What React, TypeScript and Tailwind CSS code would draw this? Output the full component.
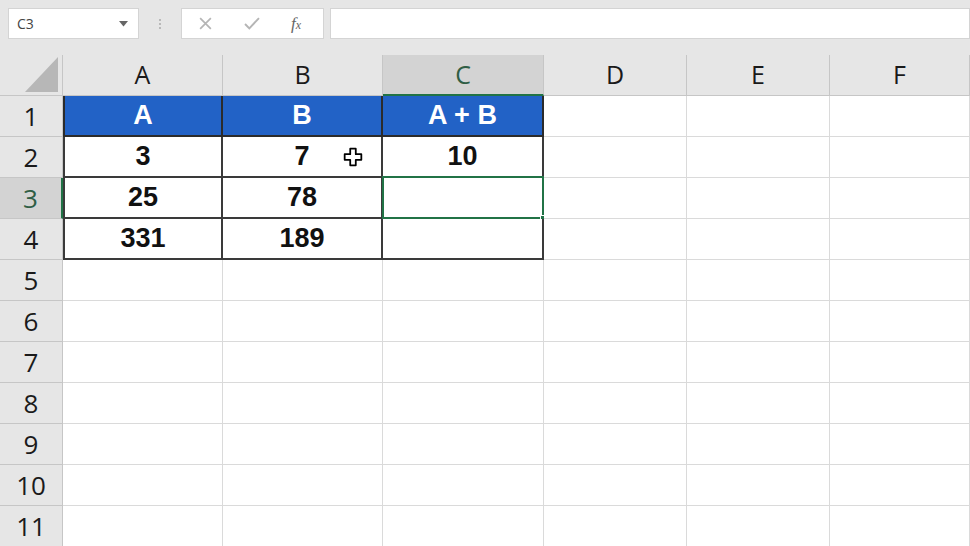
import React from "react";

const cols = ["A", "B", "C", "D", "E", "F"];

const data: Record<number, string[]> = {
  1: ["A", "B", "A + B"],
  2: ["3", "7", "10"],
  3: ["25", "78", ""],
  4: ["331", "189", ""],
};

function MoveCursor() {
  return (
    <svg width="20" height="20" viewBox="0 0 18 18" className="absolute left-[120px] top-[10px]">
      <path
        d="M6.5 1.5h5v5h5v5h-5v5h-5v-5h-5v-5h5z"
        fill="#fff"
        stroke="#000"
        strokeWidth="1.6"
        strokeLinejoin="round"
      />
    </svg>
  );
}

function Cell({ row, col }: { row: number; col: number }) {
  const inTable = row <= 4 && col <= 2;
  const header = row === 1 && col <= 2;
  const text = inTable ? data[row][col] : "";
  const selected = row === 3 && col === 2;

  let cls = "relative flex items-center justify-center border-r border-b border-[#dadada] bg-white";
  if (inTable) {
    cls = header
      ? "relative flex items-center justify-center border-r-2 border-b-2 border-[#2b2b2b] bg-[#2262c6] text-white"
      : "relative flex items-center justify-center border-r-2 border-b-2 border-[#3a3a3a] bg-white text-[#111]";
    if (col === 0) cls += " border-l-2";
  }

  return (
    <div className={cls}>
      <span className="font-['Liberation_Sans',Arial,sans-serif] text-[27px] font-bold leading-none">{text}</span>
      {row === 2 && col === 1 && <MoveCursor />}
      {selected && (
        <div className="absolute -left-[1px] -top-[2px] -right-[2px] -bottom-[2px] border-2 border-[#217346]">
          <div className="absolute -right-[4px] -bottom-[4px] h-[6px] w-[6px] border border-white bg-[#217346]" />
        </div>
      )}
    </div>
  );
}

export default function App() {
  const rows = Array.from({ length: 11 }, (_, i) => i + 1);

  return (
    <div className="h-[546px] w-[970px] overflow-hidden bg-[#e6e6e6] font-['Open_Sans','Noto_Sans',sans-serif]">
      {/* formula bar */}
      <div className="flex h-[55px] items-start pt-[8px]">
        <div className="ml-[8px] flex h-[31px] w-[131px] items-center justify-between border border-[#d4d4d4] bg-white pl-[8px] pr-[10px]">
          <span className="text-[14px] text-[#444]">C3</span>
          <svg width="9" height="6" viewBox="0 0 9 6">
            <path d="M0 0h9L4.5 5.5z" fill="#666" />
          </svg>
        </div>
        <div className="flex h-[31px] w-[42px] flex-col items-center justify-center gap-[2px]">
          <span className="h-[2px] w-[2px] rounded-full bg-[#aaa]" />
          <span className="h-[2px] w-[2px] rounded-full bg-[#aaa]" />
          <span className="h-[2px] w-[2px] rounded-full bg-[#aaa]" />
        </div>
        <div className="flex h-[31px] w-[143px] items-center border border-[#d4d4d4] bg-white">
          <svg width="15" height="15" viewBox="0 0 14 14" className="ml-[16px]">
            <path d="M2 2l10 10M12 2L2 12" stroke="#b5b5b5" strokeWidth="1.6" />
          </svg>
          <svg width="18" height="15" viewBox="0 0 16 14" className="ml-[30px]">
            <path d="M1.5 7.5l4 4L14.5 2" stroke="#b5b5b5" strokeWidth="1.8" fill="none" />
          </svg>
          <span className="ml-[30px] font-['Liberation_Serif',serif] text-[17px] italic text-[#666]">
            f<span className="text-[12px]">x</span>
          </span>
        </div>
        <div className="ml-[6px] h-[31px] flex-1 border border-[#d4d4d4] bg-white" />
      </div>

      {/* sheet grid */}
      <div className="grid grid-cols-[63px_160px_160px_161px_143px_143px_1fr] auto-rows-[41px]">
        <div className="relative border-r border-b border-[#c6c6c6] bg-[#e6e6e6]">
          <svg width="33" height="35" viewBox="0 0 33 35" className="absolute right-[4px] bottom-[3px]">
            <path d="M33 0v35H0z" fill="#b7b7b7" />
          </svg>
        </div>
        {cols.map((c) =>
          c === "C" ? (
            <div
              key={c}
              className="flex items-center justify-center border-r border-b-2 border-r-[#c6c6c6] border-b-[#217346] bg-[#d3d3d3] text-[25px] text-[#2f5e45]"
            >
              {c}
            </div>
          ) : (
            <div
              key={c}
              className="flex items-center justify-center border-r border-b border-[#c6c6c6] bg-[#e6e6e6] text-[25px] text-[#1a1a1a]"
            >
              {c}
            </div>
          )
        )}

        {rows.map((r) => (
          <React.Fragment key={r}>
            {r === 3 ? (
              <div className="flex items-center justify-center border-r-2 border-b border-r-[#217346] border-b-[#c6c6c6] bg-[#d3d3d3] text-[26px] text-[#2f5e45]">
                {r}
              </div>
            ) : (
              <div className="flex items-center justify-center border-r border-b border-[#c6c6c6] bg-[#e6e6e6] text-[26px] text-[#1a1a1a]">
                {r}
              </div>
            )}
            {cols.map((c, ci) => (
              <Cell key={c} row={r} col={ci} />
            ))}
          </React.Fragment>
        ))}
      </div>
    </div>
  );
}
